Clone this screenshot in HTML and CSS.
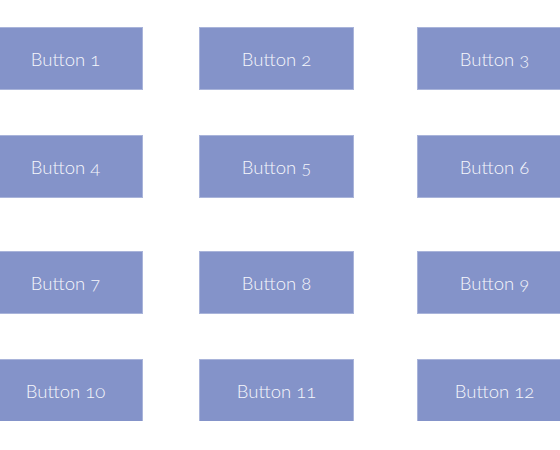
FILE: index.html
```html
<!DOCTYPE html>
<html lang="en">
<head>
    <meta charset="UTF-8">
    <meta name="viewport" content="width=device-width, initial-scale=1.0">
    <title>Buttons</title>
    <link rel="stylesheet" href="styles.css">
</head>
<body>

<div class="grid">
    <button class="btn">Button 1</button>
    <button class="btn">Button 2</button>
    <button class="btn">Button 3</button>
    <button class="btn">Button 4</button>
    <button class="btn">Button 5</button>
    <button class="btn">Button 6</button>
    <button class="btn">Button 7</button>
    <button class="btn">Button 8</button>
    <button class="btn">Button 9</button>
    <button class="btn">Button 10</button>
    <button class="btn">Button 11</button>
    <button class="btn">Button 12</button>
</div>

</body>
</html>
```

FILE: styles.css
```css
body {
    margin: 0;
    background: #fff;
    font-family: Lato, "Open Sans", sans-serif;
    overflow: hidden;
}
.grid {
    display: grid;
    grid-template-columns: 211px 218px 155px;
    grid-template-rows: 108px 116px 108px 62px;
    margin-left: -12px;
    padding-top: 27px;
}
.btn {
    width: 155px;
    height: 63px;
    background: #8493c9;
    border: 1px solid #a9b4da;
    color: #f6f7fc;
    font-family: Lato, "Open Sans", sans-serif;
    font-weight: 300;
    font-size: 18.5px;
    font-variant-numeric: oldstyle-nums;
    padding: 0;
    cursor: pointer;
}
.btn:hover {
    background: #7383bd;
}
```
